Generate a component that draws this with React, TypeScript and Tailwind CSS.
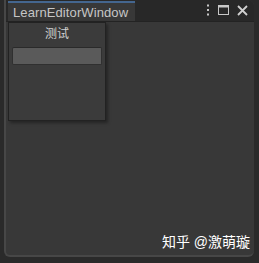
import React from 'react';

const DotsIcon = () => (
  <svg width="4" height="12" viewBox="0 0 4 12" className="block">
    <rect x="1" y="0.5" width="2" height="2" fill="#c8c8c8" />
    <rect x="1" y="5" width="2" height="2" fill="#c8c8c8" />
    <rect x="1" y="9.5" width="2" height="2" fill="#c8c8c8" />
  </svg>
);

const MaxIcon = () => (
  <svg width="11" height="10" viewBox="0 0 11 10" className="block">
    <rect x="0.5" y="0.5" width="10" height="9" fill="none" stroke="#c8c8c8" strokeWidth="1" />
    <rect x="0.5" y="0.5" width="10" height="2" fill="#c8c8c8" />
  </svg>
);

const CloseIcon = () => (
  <svg width="11" height="11" viewBox="0 0 11 11" className="block">
    <path d="M1 1 L10 10 M10 1 L1 10" stroke="#d0d0d0" strokeWidth="1.8" />
  </svg>
);

export default function App() {
  return (
    <div className="w-[259px] h-[263px] bg-[#2a2a2a] pl-[4px] pr-[5px] pb-[6px] font-['Liberation_Sans','Noto_Sans_CJK_SC',sans-serif]">
      <div className="relative h-full flex flex-col rounded-b-[6px] rounded-tr-[6px] border-l-2 border-b-2 border-[#474747] bg-[#383838] overflow-hidden">
        <div className="h-[22px] flex items-end bg-[#282828] border-b border-[#232323]">
          <div className="ml-[2px] w-[127px] h-[20px] bg-[#383838] border-t-2 border-[#44668f] flex items-center pl-[5px]">
            <span className="text-[13px] leading-none text-[#c6c6c6] tracking-[0.1px]">LearnEditorWindow</span>
          </div>
          <div className="flex-1" />
          <div className="flex items-center gap-[8px] h-[20px] pr-[6px] pb-[2px]">
            <DotsIcon />
            <MaxIcon />
            <CloseIcon />
          </div>
        </div>
        <div className="flex-1 relative">
          <div className="ml-[2px] w-[98px] h-[99px] bg-[#3b3b3b] border border-[#222222] shadow-[2px_2px_3px_rgba(0,0,0,0.35)] flex flex-col items-center">
            <div className="mt-[4px] text-[12px] leading-[14px] text-[#d2d2d2]">测试</div>
            <div className="mt-[6px] w-[90px] h-[18px] bg-[#5a5a5a] border border-[#303030] border-t-[#2a2a2a] rounded-[2px]" />
          </div>
          <div className="absolute right-[4px] bottom-[6px] text-[14px] leading-none text-white">知乎 @激萌璇</div>
        </div>
      </div>
    </div>
  );
}
